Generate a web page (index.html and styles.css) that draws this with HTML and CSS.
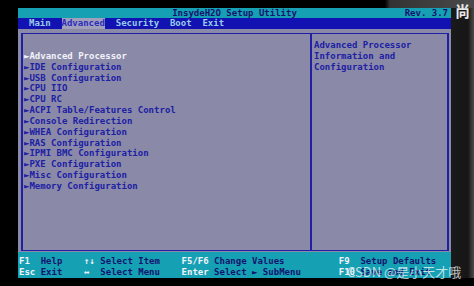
FILE: index.html
```html
<!DOCTYPE html>
<html lang="en">
<head>
    <meta charset="UTF-8">
    <title>InsydeH2O Setup Utility</title>
    <link rel="stylesheet" href="styles.css">
</head>
<body>
    <div class="page">
        <div class="top-strip"></div>
        <div class="mid">
            <div class="gap"></div>

            <!-- BIOS screen, 80x25 text mode -->
            <div class="screen">
                <div class="title-bar">
                    <span class="title">InsydeH2O Setup Utility</span>
                    <span class="rev">Rev. 3.7</span>
                </div>
                <div class="menu-bar">Main  <span class="menu-item active">Advanced</span>  Security  Boot  Exit</div>

                <div class="main">
                    <div class="panel">
                        <div class="options">
                            <div class="option blank"> </div>
                            <div class="option selected">►Advanced Processor</div>
                            <div class="option">►IDE Configuration</div>
                            <div class="option">►USB Configuration</div>
                            <div class="option">►CPU IIO</div>
                            <div class="option">►CPU RC</div>
                            <div class="option">►ACPI Table/Features Control</div>
                            <div class="option">►Console Redirection</div>
                            <div class="option">►WHEA Configuration</div>
                            <div class="option">►RAS Configuration</div>
                            <div class="option">►IPMI BMC Configuration</div>
                            <div class="option">►PXE Configuration</div>
                            <div class="option">►Misc Configuration</div>
                            <div class="option">►Memory Configuration</div>
                        </div>
                        <div class="help">
                            <div>Advanced Processor</div>
                            <div>Information and</div>
                            <div>Configuration</div>
                        </div>
                    </div>
                </div>

                <div class="footer">
                    <div class="footer-row"><span class="key">F1</span>  Help    <span class="key">↑↓</span> Select Item    <span class="key">F5/F6</span> Change Values          <span class="key">F9</span>  Setup Defaults</div>
                    <div class="footer-row"><span class="key">Esc</span> Exit    <span class="key">↔</span>  Select Menu    <span class="key">Enter</span> Select ► SubMenu       <span class="key">F10</span> Save and Exit</div>
                </div>
            </div>

            <div class="bezel"></div>
        </div>

        <!-- overlays from the photo -->
        <div class="watermark">CSDN @是小天才哦</div>
        <div class="corner-mark">尚</div>
    </div>
</body>
</html>
```

FILE: styles.css
```css
:root {
    --cyan: #16a0b4;
    --blue-bar: #1212b2;
    --panel-grey: #8a8aa8;
    --ink: #2020a4;
    --navy: #14146e;
    --white: #f2f2fa;
    --menu-text: #98cce8;
}
body {
    margin: 0;
    background-color: #000;
    font-family: 'DejaVu Sans Mono', 'Liberation Mono', monospace;
    font-size: 9px;
    font-weight: bold;
    overflow: hidden;
}
.page {
    position: relative;
    width: 474px;
    height: 286px;
}
.top-strip {
    height: 8px;
    background: linear-gradient(to right, #000 385px, #333 390px, #4a4a4a);
}
.mid {
    display: flex;
    height: 270px;
}
.gap { width: 18px; }

/* --- Screen --- */
.screen {
    width: 433px;
    display: flex;
    flex-direction: column;
}
.title-bar {
    height: 10px;
    line-height: 10px;
    background-color: var(--cyan);
    color: var(--navy);
    display: grid;
    grid-template-columns: 1fr auto 1fr;
}
.title { grid-column: 2; }
.rev { justify-self: end; padding-right: 3px; }
.menu-bar {
    height: 11px;
    line-height: 11px;
    background-color: var(--blue-bar);
    color: var(--menu-text);
    padding-left: 11px;
    white-space: pre;
}
.menu-item.active {
    display: inline-block;
    background-color: #a0a0bc;
    color: #2c2cbc;
}

/* --- Main area --- */
.main {
    height: 223px;
    box-sizing: border-box;
    padding: 4px 2px 1px 3px;
    background-color: var(--panel-grey);
}
.panel {
    display: flex;
    height: 100%;
    box-sizing: border-box;
    border: 1px solid var(--ink);
    border-left-width: 2px;
    border-right-width: 2px;
    line-height: 10.85px;
    color: var(--ink);
}
.options {
    width: 286px;
    padding: 6px 0 0 1px;
    border-right: 2px solid var(--ink);
}
.option { white-space: pre; height: 10.85px; }
.option.selected { color: var(--white); }
.help {
    flex: 1;
    padding: 6px 0 0 2px;
}

/* --- Footer --- */
.footer {
    height: 26px;
    box-sizing: border-box;
    padding: 4px 0 0 1px;
    line-height: 10.8px;
    background-color: var(--cyan);
    color: var(--navy);
}
.footer-row { white-space: pre; }
.footer .key { color: var(--white); }

/* --- Monitor bezel --- */
.bezel {
    flex: 1;
    background: linear-gradient(to right, #1a1a1a 0, #161616 17px, #3c3c3c 21px, #4a4a4a);
}

/* --- Photo overlays --- */
.watermark {
    position: absolute;
    left: 347px;
    top: 263px;
    font-family: 'Noto Sans CJK SC', 'Noto Sans', sans-serif;
    font-size: 13px;
    font-weight: normal;
    line-height: 17px;
    color: rgba(255, 255, 255, 0.72);
}
.corner-mark {
    position: absolute;
    left: 455px;
    top: 3px;
    font-family: 'Noto Sans CJK SC', sans-serif;
    font-size: 15px;
    line-height: 16px;
    color: #e8e8e8;
}
```
